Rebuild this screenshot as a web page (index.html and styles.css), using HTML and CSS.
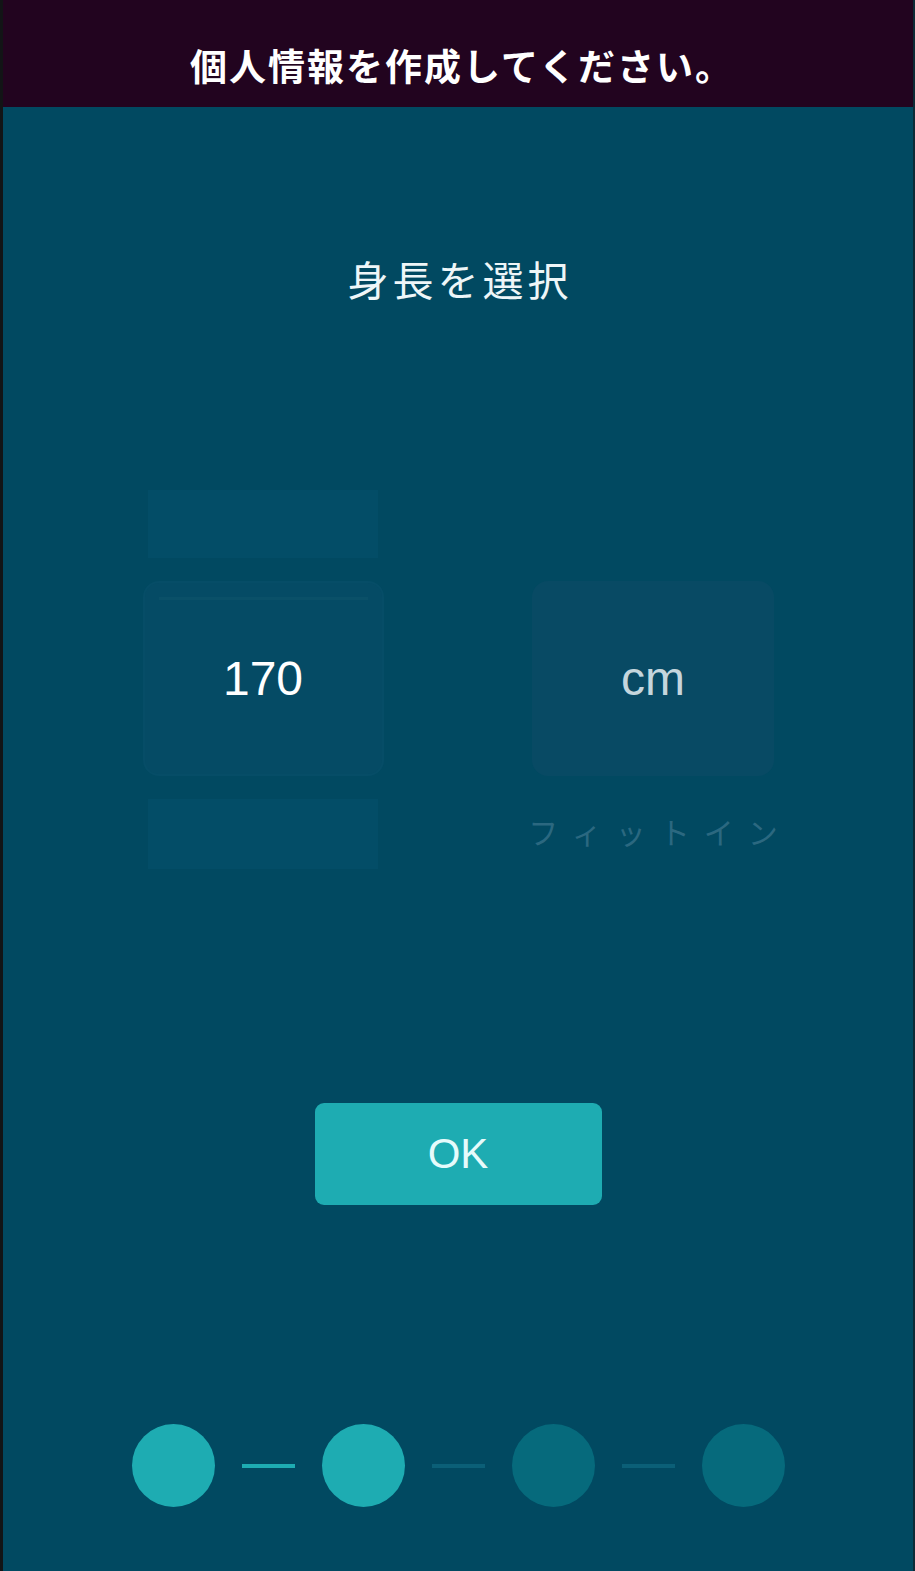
FILE: index.html
```html
<!DOCTYPE html>
<html lang="ja">
<head>
<meta charset="utf-8">
<title>身長を選択</title>
<link rel="stylesheet" href="styles.css">
</head>
<body>
<div class="app">
  <header class="topbar">
    <h1 class="topbar-title">個人情報を作成してください。</h1>
  </header>
  <main class="content">
    <h2 class="page-title">身長を選択</h2>
    <div class="picker-row">
      <div class="picker-col">
        <div class="ghost ghost-top"></div>
        <div class="selected-box">
          <div class="indicator"></div>
          <span class="value">170</span>
        </div>
        <div class="ghost ghost-bottom"></div>
      </div>
      <div class="picker-col unit-col">
        <div class="unit-box"><span class="unit">cm</span></div>
        <div class="fit-label">フィットイン</div>
      </div>
    </div>
    <button class="ok-btn">OK</button>
    <div class="steps">
      <span class="dot dot-on"></span>
      <span class="bar bar-on"></span>
      <span class="dot dot-on"></span>
      <span class="bar"></span>
      <span class="dot"></span>
      <span class="bar"></span>
      <span class="dot"></span>
    </div>
  </main>
</div>
</body>
</html>
```
FILE: styles.css
```css
* { box-sizing: border-box; }
html, body {
  margin: 0;
  padding: 0;
  height: 100%;
}
body {
  background: #014961;
  font-family: "Liberation Sans", "Noto Sans CJK JP", sans-serif;
}
.app {
  min-height: 1571px;
  background: #014961;
  border-left: 3px solid #121416;
  border-right: 2px solid #0d2a36;
  display: flex;
  flex-direction: column;
}
.topbar {
  height: 107px;
  background: #22041f;
  display: flex;
  align-items: center;
  justify-content: center;
  padding-top: 24px;
}
.topbar-title {
  margin: 0;
  color: #ffffff;
  font-family: "Noto Sans CJK JP", sans-serif;
  font-weight: 700;
  font-size: 37px;
  line-height: 1;
  letter-spacing: 2px;
  margin-left: 8px;
  white-space: nowrap;
}
.content {
  display: flex;
  flex-direction: column;
  align-items: center;
}
.page-title {
  margin: 141px 0 0;
  height: 60px;
  line-height: 60px;
  font-family: "Noto Sans CJK JP", sans-serif;
  font-weight: 400;
  font-size: 41px;
  letter-spacing: 4px;
  margin-right: -4px;
  color: #eef6f8;
}
.picker-row {
  margin-top: 182px;
  display: flex;
  gap: 149px;
}
.picker-col {
  width: 241px;
  display: flex;
  flex-direction: column;
  align-items: center;
}
.ghost {
  width: 230px;
  background: #034d67;
}
.ghost-top { height: 68px; }
.ghost-bottom { height: 70px; margin-top: 23px; }
.selected-box {
  position: relative;
  margin-top: 23px;
  width: 241px;
  height: 195px;
  border-radius: 16px;
  background: #054b65;
  border: 2px solid #064d67;
  display: flex;
  align-items: center;
  justify-content: center;
}
.indicator {
  position: absolute;
  left: 14px;
  right: 14px;
  top: 14px;
  height: 3px;
  background: #0a5068;
}
.value {
  color: #ffffff;
  font-size: 48px;
  line-height: 1;
}
.unit-col { padding-top: 91px; }
.unit-box {
  width: 242px;
  height: 195px;
  border-radius: 16px;
  background: #084a64;
  display: flex;
  align-items: center;
  justify-content: center;
}
.unit {
  color: #c5d6dd;
  font-size: 48px;
  line-height: 1;
}
.fit-label {
  margin-top: 40px;
  font-family: "Noto Sans CJK JP", sans-serif;
  font-size: 30px;
  line-height: 1;
  letter-spacing: 14px;
  margin-right: -14px;
  white-space: nowrap;
  color: #2b6880;
}
.ok-btn {
  margin-top: 234px;
  width: 287px;
  height: 102px;
  border: none;
  border-radius: 9px;
  background: #1eacb2;
  color: #e6fbfb;
  font-family: "Liberation Sans", sans-serif;
  font-size: 42px;
  padding: 0;
}
.steps {
  margin-top: 219px;
  display: flex;
  align-items: center;
}
.dot {
  width: 83px;
  height: 83px;
  border-radius: 50%;
  background: #066a7c;
}
.dot-on { background: #1eacb2; }
.bar {
  width: 53px;
  height: 4px;
  margin: 0 27px;
  background: #0b5f77;
}
.bar-on { background: #1eacb2; }
```
